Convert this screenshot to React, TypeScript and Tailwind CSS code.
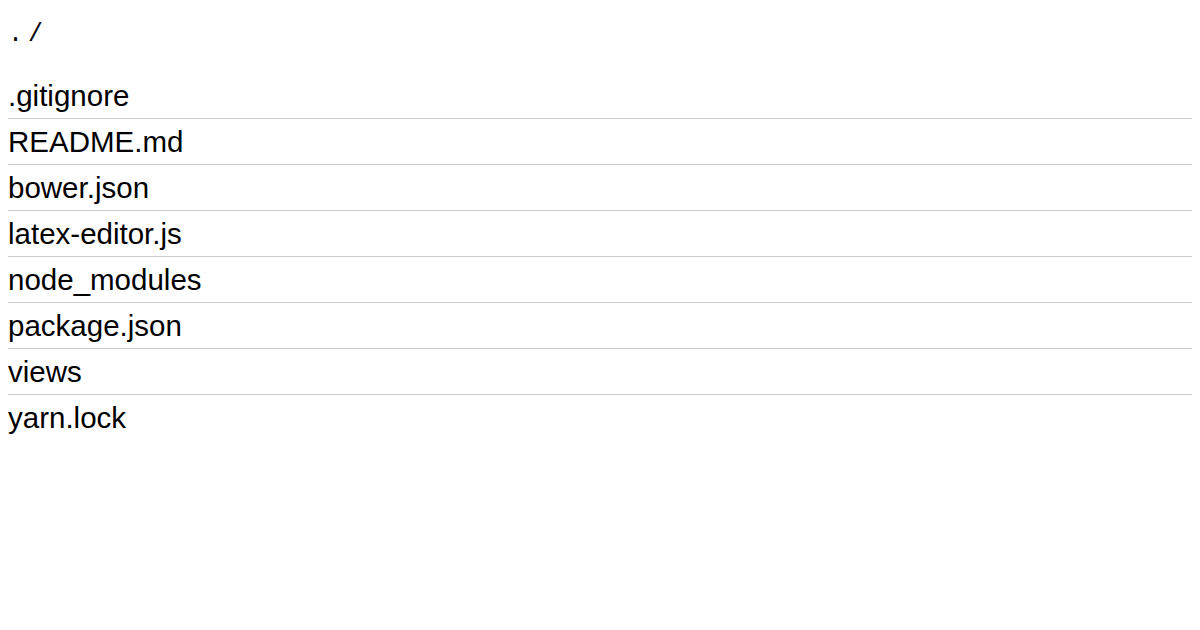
import React from "react";

const files = [
  ".gitignore",
  "README.md",
  "bower.json",
  "latex-editor.js",
  "node_modules",
  "package.json",
  "views",
  "yarn.lock",
];

export default function App() {
  return (
    <div className="min-h-[630px] bg-white p-2 text-black">
      <div className="h-[65px] pt-[10px] font-['Liberation_Mono',monospace] text-[25px] leading-[34px] tracking-[5px]">
        ./
      </div>
      <ul className="font-['Liberation_Sans',Arial,sans-serif]">
        {files.map((f, i) => (
          <li
            key={f}
            className={
              i < files.length - 1
                ? "h-[46px] border-b border-[#cccccc] text-[29.5px] leading-[45px]"
                : "h-[46px] text-[29.5px] leading-[45px]"
            }
          >
            {f}
          </li>
        ))}
      </ul>
    </div>
  );
}
